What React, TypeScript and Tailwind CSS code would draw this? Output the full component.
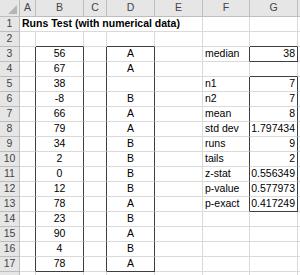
const font = { fontFamily: '"Liberation Sans", Arial, sans-serif' };

const cols = ['A', 'B', 'C', 'D', 'E', 'F', 'G'];

const bVals = ['56', '67', '38', '-8', '66', '79', '34', '2', '0', '12', '78', '23', '90', '4', '78'];
const dVals = ['A', 'A', '', 'B', 'A', 'A', 'B', 'B', 'B', 'B', 'A', 'B', 'A', 'B', 'A'];

const stats: Record<number, [string, string]> = {
  3: ['median', '38'],
  5: ['n1', '7'],
  6: ['n2', '7'],
  7: ['mean', '8'],
  8: ['std dev', '1.797434'],
  9: ['runs', '9'],
  10: ['tails', '2'],
  11: ['z-stat', '0.556349'],
  12: ['p-value', '0.577973'],
  13: ['p-exact', '0.417249'],
};

const grid = 'border-[#dadada]';
const dark = 'border-[#3f3f3f]';

function Cell({
  children,
  align = 'left',
  right = false,
  bottom = false,
}: {
  children?: React.ReactNode;
  align?: 'left' | 'center' | 'right';
  right?: boolean;
  bottom?: boolean;
}) {
  const a = align === 'center' ? 'justify-center' : align === 'right' ? 'justify-end' : 'justify-start';
  return (
    <div
      className={`flex items-center px-[2px] border-r border-b text-[10.5px] text-black whitespace-nowrap overflow-visible ${a} ${
        right ? 'border-r-[#3f3f3f]' : 'border-r-[#dadada]'
      } ${bottom ? 'border-b-[#3f3f3f]' : 'border-b-[#dadada]'}`}
    >
      {children}
    </div>
  );
}

export default function App() {
  const rows = Array.from({ length: 17 }, (_, i) => i + 1);

  return (
    <div className="w-[300px] h-[275px] overflow-hidden bg-white" style={font}>
      <div className="grid grid-cols-[20px_16px_48px_23px_48px_48px_47px_48px_20px] grid-rows-[17px_repeat(18,15px)]">
        {/* header row */}
        <div className="relative bg-[#e6e6e6] border-r border-b border-[#bdbdbd]">
          <div className="absolute right-[2px] bottom-[2px] w-0 h-0 border-l-[9px] border-l-transparent border-b-[9px] border-b-[#b5b5b5]" />
        </div>
        {cols.map((c) => (
          <div
            key={c}
            className="flex items-center justify-center bg-[#e6e6e6] border-r border-b border-[#bdbdbd] text-[10.5px] text-[#444]"
          >
            {c}
          </div>
        ))}
        <div className="bg-[#e6e6e6] border-b border-[#bdbdbd]" />

        {rows.map((r) => {
          const inB = r >= 3;
          const st = stats[r];
          const gBox = r === 3 || (r >= 5 && r <= 13);
          return (
            <div key={r} className="contents">
              <div className="flex items-center justify-center bg-[#e6e6e6] border-r border-b border-[#bdbdbd] text-[10.5px] text-[#444]">
                {r}
              </div>
              {r === 1 ? (
                <>
                  <div className={`col-span-5 flex items-center px-[2px] border-b ${grid} text-[10.5px] font-bold text-black whitespace-nowrap border-r`}>
                    Runs Test (with numerical data)
                  </div>
                  <Cell />
                  <Cell />
                  <div className={`border-b ${grid}`} />
                </>
              ) : (
                <>
                  <Cell right={inB} />
                  <Cell align="center" right={inB} bottom={r === 2 || r === 17}>
                    {inB ? bVals[r - 3] : ''}
                  </Cell>
                  <Cell right={inB} />
                  <Cell align="center" right={inB} bottom={r === 2 || r === 17}>
                    {inB ? dVals[r - 3] : ''}
                  </Cell>
                  <Cell />
                  <Cell right={gBox}>{st ? st[0] : ''}</Cell>
                  <Cell align="right" right={gBox} bottom={r === 2 || r === 3 || r === 4 || r === 13}>
                    {st ? st[1] : ''}
                  </Cell>
                  <div className={`border-b ${grid}`} />
                </>
              )}
            </div>
          );
        })}
        <div className="bg-[#e6e6e6] border-r border-[#bdbdbd]" />
        {cols.map((c) => (
          <div key={c} className={`border-r ${grid}`} />
        ))}
        <div />
      </div>
      <span className={`hidden ${dark}`} />
    </div>
  );
}
